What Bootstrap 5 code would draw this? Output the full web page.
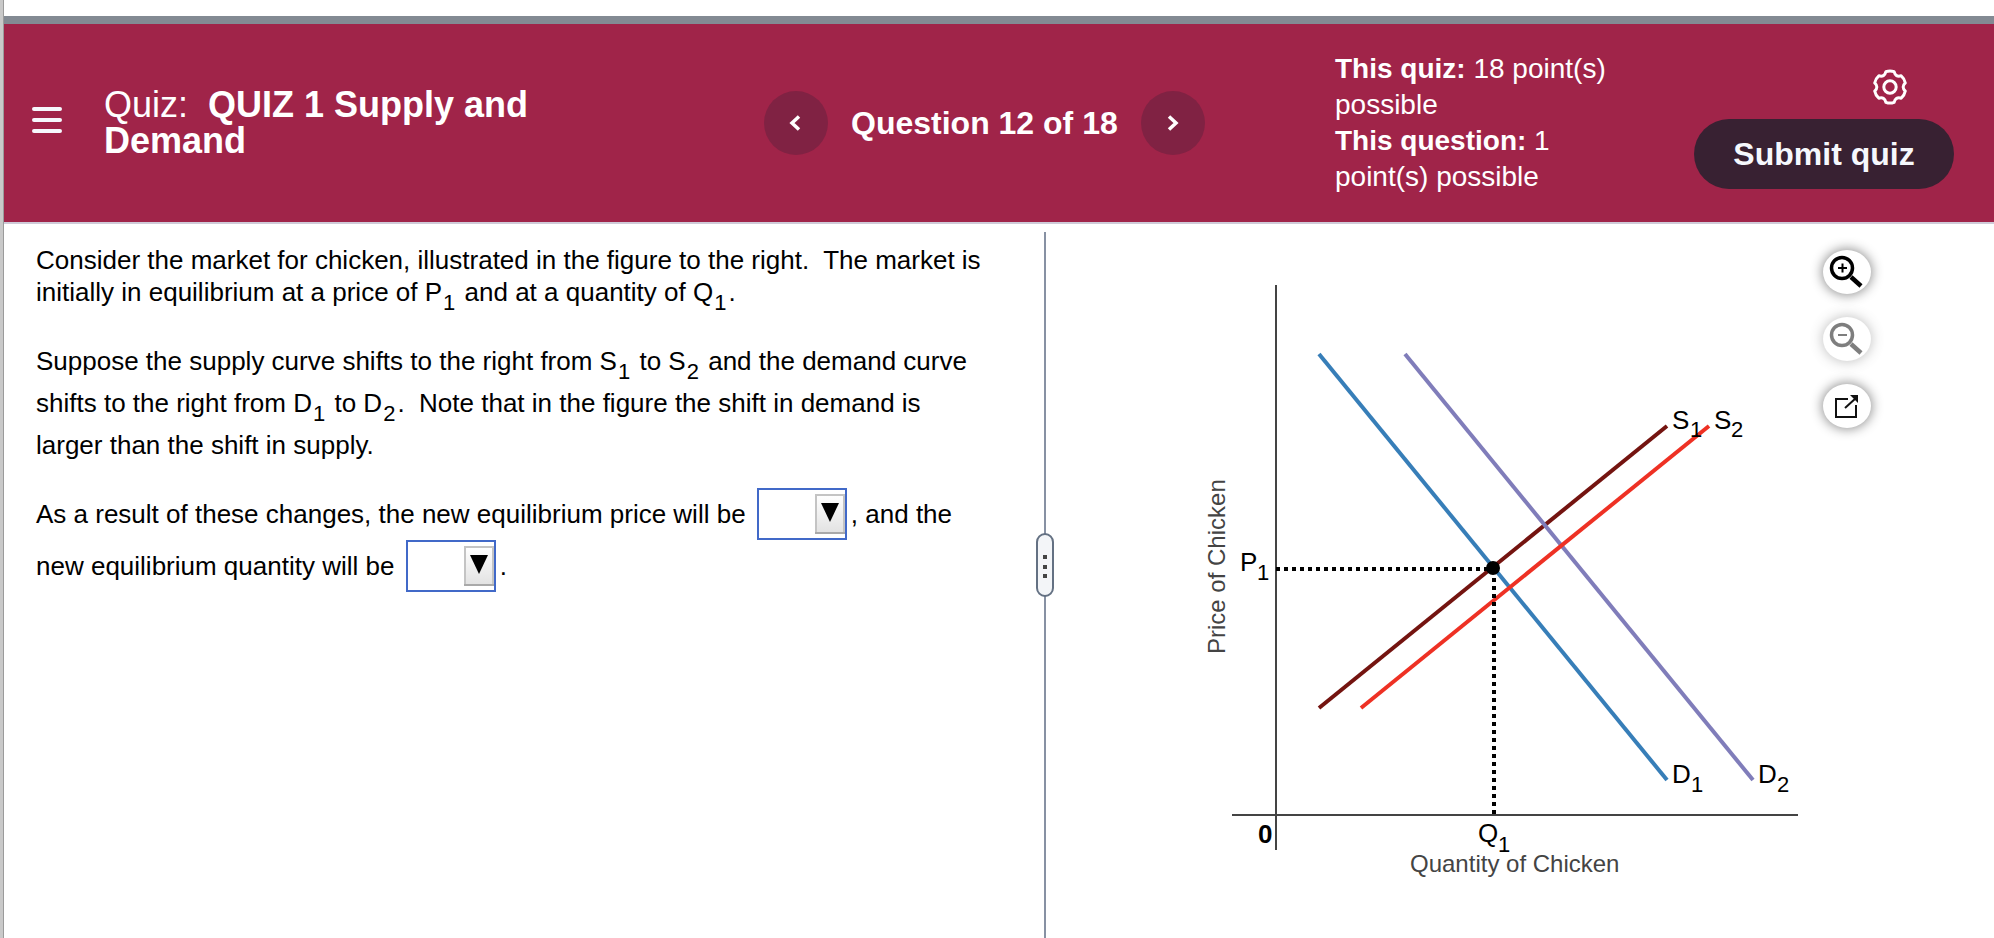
<!DOCTYPE html>
<html lang="en">
<head>
<meta charset="utf-8">
<meta name="viewport" content="width=device-width, initial-scale=1">
<title>Quiz: QUIZ 1 Supply and Demand</title>
<link rel="stylesheet" href="https://cdn.jsdelivr.net/npm/bootstrap@5.3.0/dist/css/bootstrap.min.css">
<style>
  body {
    font-family: "Liberation Sans", Arial, Helvetica, sans-serif;
    font-size: 26px;
    line-height: 32px;
    color: #000;
    background: #fff;
    border-left: 3px solid #c9c9c9;
  }
  .app-shell { border-left: 1px solid #9b9b9b; }
  .top-strip { height: 24px; border-bottom: 8px solid #838a93; }

  .quiz-header {
    display: grid;
    grid-template-columns: 760fr 571fr 290fr 329fr;
    min-height: 200px;
    padding-right: 40px;
    color: #fff;
    background: #a02449;
    border-bottom: 2px solid #cfcbd8;
  }
  .menu-btn { padding: 0 0 6px; margin-left: 28px; line-height: 0; color: #f6f8fd; }
  .quiz-title { font-size: 36px; line-height: 36px; margin-left: 42px; max-width: 480px; }
  .round-btn { width: 64px; height: 64px; padding: 0; background: #802243; line-height: 0; }
  .question-count { font-size: 32px; line-height: 36px; margin: 0 23px; }
  .points-info { font-size: 28px; line-height: 36px; }
  .header-actions { gap: 14px; padding-top: 12px; }
  .gear-btn { margin-right: 46px; line-height: 0; }
  .submit-btn {
    width: 260px; height: 70px;
    font-size: 32px; line-height: 36px;
    color: #f6f8fd; background: #382132;
  }

  .question-pane { flex: 0 1 52.25%; padding: 20px 56px 0 32px; }
  .question-pane p { margin: 0; }
  .question-pane sub { font-size: 22px; line-height: 0; bottom: 0; margin: 0 2px 0 1px; vertical-align: -9px; }
  .setup-text { line-height: 32px; }
  .shift-text { line-height: 42px; padding-top: 32px; }
  .answer-text { line-height: 52px; padding-top: 22px; }
  .answer-select {
    width: 90px; height: 52px;
    margin: 0 4px;
    vertical-align: top;
    appearance: none;
    border: 2px solid #4169c8;
    border-radius: 0;
    background: #fff url("data:image/svg+xml,%3Csvg xmlns='http://www.w3.org/2000/svg' width='30' height='40'%3E%3Cdefs%3E%3ClinearGradient id='g' x2='0' y2='1'%3E%3Cstop stop-color='%23fff'/%3E%3Cstop offset='1' stop-color='%23e2e2e2'/%3E%3C/linearGradient%3E%3C/defs%3E%3Crect x='1' y='1' width='28' height='38' fill='url(%23g)' stroke='%23c4c4c4' stroke-width='2'/%3E%3Cpath d='M0 39h30' stroke='%23a9a9a9' stroke-width='2'/%3E%3Cpath d='M6 9h18L15 28z'/%3E%3C/svg%3E") no-repeat right 0 top 4px;
  }

  .pane-divider { width: 2px; margin-top: 8px; background: #8791a3; }
  .drag-handle {
    width: 18px; height: 64px;
    top: 301px; left: 50%;
    border: 2px solid #647183;
    background: #f3f5f8;
  }
  .content-row { min-height: calc(100vh - 224px); }
  .figure-pane { padding: 26px 123px 0 20px; gap: 23px; min-width: 0; }
  .market-graph { flex: 0 1 600px; min-width: 0; margin-top: 24px; height: auto; }
  .tool-btn {
    width: 48px; height: 44px; padding: 0;
    background: #fff;
    box-shadow: 0 0 12px 1px rgba(0, 0, 0, .45);
    line-height: 0;
  }
  .tool-btn:disabled { opacity: .5; }
  .tool-list { gap: 23px; }
</style>
</head>
<body>
<div class="app-shell">
  <div class="top-strip"></div>

  <header class="quiz-header align-items-center">
    <div class="d-flex align-items-center">
      <button type="button" class="menu-btn btn border-0" aria-label="Menu">
        <svg width="30" height="26" viewBox="0 0 30 26" fill="none" stroke="currentColor" stroke-width="4" stroke-linecap="round"><path d="M2 2h26M2 13h26M2 24h26"/></svg>
      </button>
      <h1 class="quiz-title fw-normal mb-0">Quiz:&nbsp; <b>QUIZ 1 Supply and Demand</b></h1>
    </div>

    <nav class="d-flex align-items-center" aria-label="Question navigation">
      <button type="button" class="round-btn btn border-0 rounded-circle" aria-label="Previous question">
        <svg width="16" height="20" viewBox="0 0 16 20" fill="none" stroke="#fff" stroke-width="3.500"><path d="M11 3.500L4 10l7 6.500"/></svg>
      </button>
      <span class="question-count fw-bold text-nowrap">Question 12 of 18</span>
      <button type="button" class="round-btn btn border-0 rounded-circle" aria-label="Next question">
        <svg width="16" height="20" viewBox="0 0 16 20" fill="none" stroke="#fff" stroke-width="3.500"><path d="M4 3.500l7 6.500-7 6.500"/></svg>
      </button>
    </nav>

    <div class="points-info">
      <div><b>This quiz:</b> 18 point(s) possible</div>
      <div><b>This question:</b> 1 point(s) possible</div>
    </div>

    <div class="header-actions d-flex flex-column align-items-end">
      <button type="button" class="gear-btn btn border-0 p-0" aria-label="Settings">
        <svg width="36" height="36" viewBox="0 0 36 36" fill="none" stroke="#fff" stroke-width="3" stroke-linejoin="round"><path d="M13.900 2.700Q18 1.200 22.100 2.700Q23.500 8.500 29.200 6.800Q32.500 9.600 33.300 13.900Q29 18 33.300 22.100Q32.500 26.400 29.200 29.200Q23.500 27.500 22.100 33.300Q18 34.800 13.900 33.300Q12.500 27.500 6.800 29.200Q3.500 26.400 2.700 22.100Q7 18 2.700 13.900Q3.500 9.600 6.800 6.800Q12.500 8.500 13.900 2.700Z"/><circle cx="18" cy="18" r="6.200"/></svg>
      </button>
      <button type="button" class="submit-btn btn border-0 rounded-pill fw-bold">Submit quiz</button>
    </div>
  </header>

  <main class="content-row d-flex">
    <section class="question-pane">
      <p class="setup-text">Consider the market for chicken, illustrated in the figure to the right.&nbsp; The market is initially in equilibrium at a price of P<sub>1</sub> and at a quantity of Q<sub>1</sub>.</p>
      <p class="shift-text">Suppose the supply curve shifts to the right from S<sub>1</sub> to S<sub>2</sub> and the demand curve shifts to the right from D<sub>1</sub> to D<sub>2</sub>.&nbsp; Note that in the figure the shift in demand is larger than the shift in supply.</p>
      <p class="answer-text"><label class="d-inline" for="price">As a result of these changes, the new equilibrium price will be</label>
        <select id="price" class="answer-select"><option></option><option>higher</option><option>lower</option></select>, and the <label class="d-inline" for="quantity">new equilibrium quantity will be</label>
        <select id="quantity" class="answer-select"><option></option><option>higher</option><option>lower</option></select>.</p>
    </section>

    <div class="pane-divider position-relative flex-shrink-0">
      <button type="button" class="drag-handle btn rounded-pill p-0 position-absolute translate-middle-x d-flex align-items-center justify-content-center" aria-label="Resize panes">
        <svg width="6" height="26" viewBox="0 0 6 26" fill="#444"><path d="M1 3h4v4H1zM1 13h4v4H1zM1 22h4v4H1z"/></svg>
      </button>
    </div>

    <section class="figure-pane d-flex flex-grow-1 justify-content-end align-items-start">
      <svg class="market-graph" width="600" height="610" viewBox="1200 274 600 610" role="img" aria-label="Supply and demand for chicken" font-size="26">
        <g stroke="#444" stroke-width="2"><path d="M1276 285V850M1232 815H1798"/></g>
        <g fill="none" stroke-width="4">
          <path d="M1319 708L1667 426" stroke="#741410"/>
          <path d="M1319 354L1667 780" stroke="#377eb8"/>
          <path d="M1405 354L1753 780" stroke="#807dba"/>
          <path d="M1361 708L1709 426" stroke="#ee3124"/>
          <path d="M1276 569H1490M1494 578V815" stroke="#000" stroke-dasharray="4 4"/>
        </g>
        <circle cx="1493" cy="568" r="7"/>
        <text x="1240" y="571">P</text><text x="1257" y="580" font-size="22">1</text>
        <text x="1672" y="429">S</text><text x="1690" y="437" font-size="22">1</text>
        <text x="1714" y="429">S</text><text x="1731" y="437" font-size="22">2</text>
        <text x="1672" y="783">D</text><text x="1691" y="792" font-size="22">1</text>
        <text x="1758" y="783">D</text><text x="1777" y="792" font-size="22">2</text>
        <text x="1478" y="842">Q</text><text x="1498" y="852" font-size="22">1</text>
        <text x="1258" y="843" font-weight="bold">0</text>
        <g font-size="24" fill="#444">
          <text x="1410" y="872">Quantity of Chicken</text>
          <text transform="translate(1225 654) rotate(-90)">Price of Chicken</text>
        </g>
      </svg>

      <div class="tool-list d-flex flex-column flex-shrink-0">
        <button type="button" class="tool-btn btn border-0 rounded-circle" aria-label="Zoom in">
          <svg width="36" height="36" viewBox="0 0 36 36" fill="none" stroke="#000"><circle cx="13" cy="14" r="10.500" stroke-width="3.500"/><path d="M22 23L32 32" stroke-width="4.500"/><path d="M9 14h9M13.500 9.500v9" stroke-width="2"/></svg>
        </button>
        <button type="button" class="tool-btn btn border-0 rounded-circle" aria-label="Zoom out" disabled>
          <svg width="36" height="36" viewBox="0 0 36 36" fill="none" stroke="#000"><circle cx="13" cy="14" r="10.500" stroke-width="3.500"/><path d="M22 23L32 32" stroke-width="4.500"/><path d="M9 14h9" stroke-width="2"/></svg>
        </button>
        <button type="button" class="tool-btn btn border-0 rounded-circle" aria-label="Open in new window">
          <svg width="26" height="26" viewBox="0 0 26 26" fill="none" stroke="#111" stroke-width="2"><path d="M14 6H2v18h20V12M11 15L22 5"/><path d="M16 2h8v8z" fill="#111" stroke="none"/></svg>
        </button>
      </div>
    </section>
  </main>
</div>
<script src="https://cdn.jsdelivr.net/npm/bootstrap@5.3.0/dist/js/bootstrap.bundle.min.js"></script>
</body>
</html>
